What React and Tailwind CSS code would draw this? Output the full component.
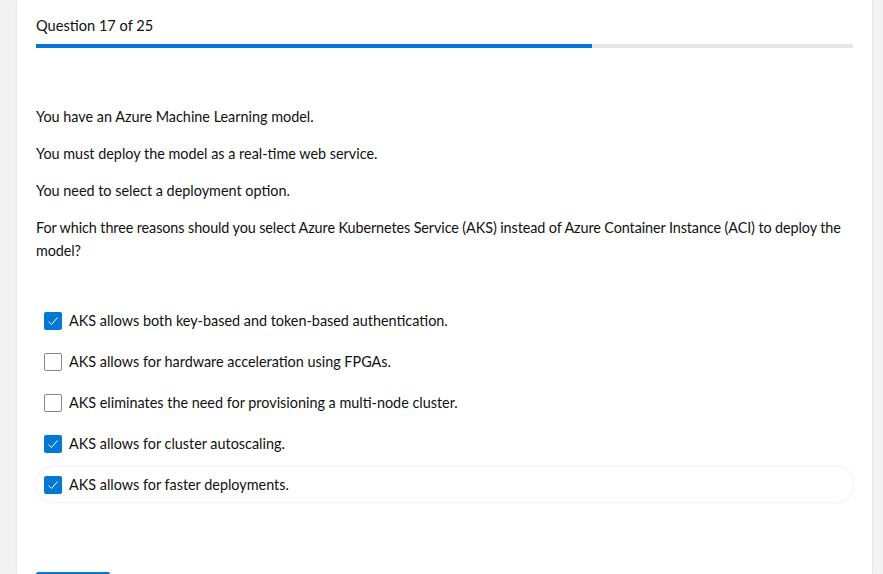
import React from "react";

const options = [
  { text: "AKS allows both key-based and token-based authentication.", checked: true },
  { text: "AKS allows for hardware acceleration using FPGAs.", checked: false },
  { text: "AKS eliminates the need for provisioning a multi-node cluster.", checked: false },
  { text: "AKS allows for cluster autoscaling.", checked: true },
  { text: "AKS allows for faster deployments.", checked: true, focused: true },
];

function Checkbox({ checked }) {
  if (checked) {
    return (
      <span className="flex h-[18px] w-[18px] shrink-0 items-center justify-center rounded-[2px] bg-[#0078d4]">
        <svg width="12" height="12" viewBox="0 0 12 12" fill="none">
          <path d="M1.5 6.5 L4.5 9.5 L10.5 2.5" stroke="white" strokeWidth="1" />
        </svg>
      </span>
    );
  }
  return <span className="h-[18px] w-[18px] shrink-0 rounded-[2px] border border-[#8a8886] bg-white" />;
}

function Option({ text, checked, focused }) {
  return (
    <label
      className={
        "flex h-[35px] items-center gap-[7px] rounded-[17px] pl-[8px] " +
        (focused ? "shadow-[0_0_3px_rgba(0,0,0,0.12)]" : "")
      }
    >
      <Checkbox checked={checked} />
      <span className="text-[14.4px] text-[#111111]">{text}</span>
    </label>
  );
}

export default function App() {
  return (
    <div className="flex min-h-screen bg-[#f2f2f2]" style={{ fontFamily: 'Lato, "Open Sans", sans-serif' }}>
      <main className="ml-[17px] h-[574px] w-[855px] overflow-hidden bg-white px-[19px] pt-[16px] shadow-[0_0_2px_rgba(0,0,0,0.12)]">
        <div className="text-[14.6px] leading-[20px] text-[#111111]">Question 17 of 25</div>
        <div className="mt-[8px] h-[4px] w-full bg-[#e6e6e6]">
          <div className="h-full w-[68%] bg-[#0078d4]" />
        </div>

        <div className="mt-[57px] flex flex-col gap-[14px] text-[14.4px] leading-[23px] text-[#111111]">
          <p>You have an Azure Machine Learning model.</p>
          <p>You must deploy the model as a real-time web service.</p>
          <p>You need to select a deployment option.</p>
          <p className="tracking-[-0.1px]">
            For which three reasons should you select Azure Kubernetes Service (AKS) instead of Azure Container
            Instance (ACI) to deploy the model?
          </p>
        </div>

        <div className="mt-[41px] flex flex-col gap-[6px]">
          {options.map((o) => (
            <Option key={o.text} {...o} />
          ))}
        </div>

        <div className="mt-[70px] h-[32px] w-[74px] rounded-[2px] bg-[#0078d4]" />
      </main>
    </div>
  );
}
